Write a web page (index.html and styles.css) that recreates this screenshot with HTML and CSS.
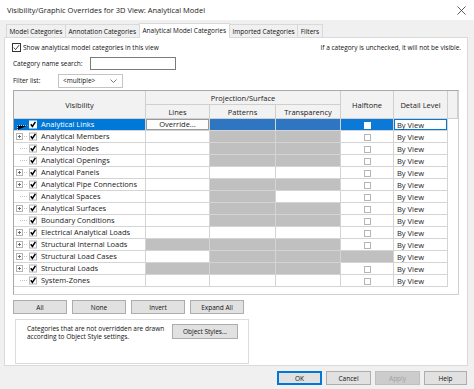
FILE: index.html
```html
<!DOCTYPE html>
<html>
<head>
<meta charset="utf-8">
<link rel="stylesheet" href="styles.css">
</head>
<body>
<svg class="defs" width="0" height="0" aria-hidden="true">
  <defs>
    <symbol id="t-exp" viewBox="0 0 26 11">
      <rect x="2.5" y="2.5" width="6" height="6" fill="#fff" stroke="#b4b4b4"/>
      <path d="M4 5.5h3M5.5 4v3" stroke="#6a6a6a" stroke-width="1"/>
      <path d="M10 5.5h4" stroke="#c8c8c8" stroke-dasharray="1 1"/>
      <rect x="15.5" y="2" width="7" height="7" fill="#fff" stroke="#b8b8b8"/>
      <path d="M16.8 5.3l1.6 2.1l3-4.6" fill="none" stroke="#000" stroke-width="1.5"/>
    </symbol>
    <symbol id="t-leaf" viewBox="0 0 26 11">
      <path d="M6 5.5h8" stroke="#c4c4c4" stroke-dasharray="1 1"/>
      <rect x="15.5" y="2" width="7" height="7" fill="#fff" stroke="#b8b8b8"/>
      <path d="M16.8 5.3l1.6 2.1l3-4.6" fill="none" stroke="#000" stroke-width="1.5"/>
    </symbol>
    <symbol id="t-root" viewBox="0 0 26 11">
      <path d="M3.5 11V6.5h10" stroke="#bcd8f3" stroke-dasharray="1 1"/>
      <rect x="15.5" y="2" width="7" height="7" fill="#fff" stroke="#fff"/>
      <path d="M16.8 5.3l1.6 2.1l3-4.6" fill="none" stroke="#000" stroke-width="1.5"/>
    </symbol>
  </defs>
</svg>

<div class="titlebar">
  <span class="title">Visibility/Graphic Overrides for 3D View: Analytical Model</span>
  <svg class="close" width="9" height="9" viewBox="0 0 9 9"><path d="M0.5 0.5l8 8M8.5 0.5l-8 8" stroke="#333" stroke-width="0.8"/></svg>
</div>

<div class="tabs">
  <div class="tab">Model Categories</div>
  <div class="tab">Annotation Categories</div>
  <div class="tab active">Analytical Model Categories</div>
  <div class="tab">Imported Categories</div>
  <div class="tab">Filters</div>
</div>

<div class="panel">
  <div class="row-show">
    <label class="show">
      <svg class="cb" width="9" height="9" viewBox="0 0 9 9"><rect x="0.5" y="0.5" width="8" height="8" fill="#fff" stroke="#333"/><path d="M1.8 4.6l1.8 2l3.6-4.6" fill="none" stroke="#333" stroke-width="0.9"/></svg>
      <span>Show analytical model categories in this view</span>
    </label>
    <span class="hint">If a category is unchecked, it will not be visible.</span>
  </div>
  <div class="field">
    <span class="lbl lbl-search">Category name search:</span>
    <span class="input"></span>
  </div>
  <div class="field field-filter">
    <span class="lbl lbl-filter">Filter list:</span>
    <span class="select"><span>&lt;multiple&gt;</span><svg width="7" height="4" viewBox="0 0 7 4"><path d="M0.5 0.5l3 3l3-3" fill="none" stroke="#555" stroke-width="0.8"/></svg></span>
  </div>

  <div class="grid">
    <table>
      <colgroup>
        <col class="c-vis"><col class="c-lines"><col class="c-pat"><col class="c-tr"><col class="c-half"><col class="c-det"><col class="c-fill">
      </colgroup>
      <thead>
        <tr class="h1">
          <th rowspan="2">Visibility</th>
          <th colspan="3">Projection/Surface</th>
          <th rowspan="2">Halftone</th>
          <th rowspan="2">Detail Level</th>
          <th rowspan="2" class="hfill"></th>
        </tr>
        <tr class="h2">
          <th>Lines</th><th>Patterns</th><th>Transparency</th>
        </tr>
      </thead>
      <tbody>
        <tr class="sel">
          <td class="vis vis-sel"><svg class="tree" width="26" height="11"><use href="#t-root"/></svg>Analytical Links</td>
          <td class="ov"><span class="override">Override...</span></td>
          <td class="sb"><span class="sbfill"></span></td><td class="sb"><span class="sbfill"></span></td>
          <td class="half half-sel"><span class="hb hb-sel"></span></td>
          <td class="det det-sel">By View</td>
          <td class="fill"></td>
        </tr>
        <tr>
          <td class="vis"><svg class="tree" width="26" height="11"><use href="#t-exp"/></svg>Analytical Members</td>
          <td></td><td class="g"></td><td class="g"></td>
          <td class="half"><span class="hb"></span></td><td class="det">By View</td><td class="fill"></td>
        </tr>
        <tr>
          <td class="vis"><svg class="tree" width="26" height="11"><use href="#t-leaf"/></svg>Analytical Nodes</td>
          <td></td><td class="g"></td><td class="g"></td>
          <td class="half"><span class="hb"></span></td><td class="det">By View</td><td class="fill"></td>
        </tr>
        <tr>
          <td class="vis"><svg class="tree" width="26" height="11"><use href="#t-leaf"/></svg>Analytical Openings</td>
          <td></td><td class="g"></td><td class="g"></td>
          <td class="half"><span class="hb"></span></td><td class="det">By View</td><td class="fill"></td>
        </tr>
        <tr>
          <td class="vis"><svg class="tree" width="26" height="11"><use href="#t-exp"/></svg>Analytical Panels</td>
          <td></td><td></td><td></td>
          <td class="half"><span class="hb"></span></td><td class="det">By View</td><td class="fill"></td>
        </tr>
        <tr>
          <td class="vis"><svg class="tree" width="26" height="11"><use href="#t-exp"/></svg>Analytical Pipe Connections</td>
          <td></td><td class="g"></td><td class="g"></td>
          <td class="half"><span class="hb"></span></td><td class="det">By View</td><td class="fill"></td>
        </tr>
        <tr>
          <td class="vis"><svg class="tree" width="26" height="11"><use href="#t-leaf"/></svg>Analytical Spaces</td>
          <td></td><td class="g"></td><td></td>
          <td class="half"><span class="hb"></span></td><td class="det">By View</td><td class="fill"></td>
        </tr>
        <tr>
          <td class="vis"><svg class="tree" width="26" height="11"><use href="#t-exp"/></svg>Analytical Surfaces</td>
          <td></td><td class="g"></td><td class="g"></td>
          <td class="half"><span class="hb"></span></td><td class="det">By View</td><td class="fill"></td>
        </tr>
        <tr>
          <td class="vis"><svg class="tree" width="26" height="11"><use href="#t-leaf"/></svg>Boundary Conditions</td>
          <td></td><td class="g"></td><td class="g"></td>
          <td class="half"><span class="hb"></span></td><td class="det">By View</td><td class="fill"></td>
        </tr>
        <tr>
          <td class="vis"><svg class="tree" width="26" height="11"><use href="#t-exp"/></svg>Electrical Analytical Loads</td>
          <td></td><td></td><td></td>
          <td class="half"><span class="hb"></span></td><td class="det">By View</td><td class="fill"></td>
        </tr>
        <tr>
          <td class="vis"><svg class="tree" width="26" height="11"><use href="#t-exp"/></svg>Structural Internal Loads</td>
          <td class="g"></td><td class="g"></td><td class="g"></td>
          <td class="half"><span class="hb"></span></td><td class="det">By View</td><td class="fill"></td>
        </tr>
        <tr>
          <td class="vis"><svg class="tree" width="26" height="11"><use href="#t-exp"/></svg>Structural Load Cases</td>
          <td></td><td class="g"></td><td class="g"></td>
          <td class="half g"></td><td class="det">By View</td><td class="fill"></td>
        </tr>
        <tr>
          <td class="vis"><svg class="tree" width="26" height="11"><use href="#t-exp"/></svg>Structural Loads</td>
          <td class="g"></td><td class="g"></td><td class="g"></td>
          <td class="half"><span class="hb"></span></td><td class="det">By View</td><td class="fill"></td>
        </tr>
        <tr>
          <td class="vis"><svg class="tree" width="26" height="11"><use href="#t-leaf"/></svg>System-Zones</td>
          <td></td><td></td><td></td>
          <td class="half"><span class="hb"></span></td><td class="det">By View</td><td class="fill"></td>
        </tr>
      </tbody>
    </table>
  </div>

  <div class="btnrow">
    <button class="btn">All</button>
    <button class="btn">None</button>
    <button class="btn">Invert</button>
    <button class="btn">Expand All</button>
  </div>

  <div class="notebox">
    <p class="note">Categories that are not overridden are drawn according to Object Style settings.</p>
    <button class="btn btn-os">Object Styles...</button>
  </div>
</div>

<div class="footer">
  <button class="btn fbtn ok">OK</button>
  <button class="btn fbtn">Cancel</button>
  <button class="btn fbtn disabled">Apply</button>
  <button class="btn fbtn help">Help</button>
</div>
</body>
</html>
```
FILE: styles.css
```css
* { box-sizing: border-box; }

html, body {
  margin: 0;
  padding: 0;
}

body {
  width: 474px;
  height: 389px;
  overflow: hidden;
  background: #f0f0f0;
  font-family: "Open Sans", "Noto Sans", "DejaVu Sans", sans-serif;
  font-size: 6.5px;
  color: #111;
}

.defs { position: absolute; width: 0; height: 0; }

.titlebar {
  height: 20px;
  background: #fff;
  display: flex;
  align-items: center;
  justify-content: space-between;
  padding: 0 8px 0 7px;
}
.title { font-size: 7.5px; color: #222; }
.close { display: block; }

.tabs {
  height: 17px;
  display: flex;
  align-items: flex-end;
  padding-left: 6px;
}
.tab {
  height: 13px;
  padding: 0 2.5px;
  border: 1px solid #d9d9d9;
  border-bottom: 0;
  margin-right: -1px;
  display: flex;
  align-items: center;
  background: #f0f0f0;
  white-space: nowrap;
}
.tab.active {
  height: 15px;
  background: #fff;
  position: relative;
  z-index: 1;
  margin-bottom: -1px;
  padding: 0 3px 2px;
}

.panel {
  margin-left: 4px;
  width: 464px;
  height: 329px;
  background: #fff;
  border: 1px solid #dadada;
  padding-left: 8px;
}

.row-show {
  margin-top: 4px;
  height: 10px;
  display: flex;
  align-items: center;
  justify-content: space-between;
  padding-right: 6px;
}
.show {
  display: flex;
  align-items: center;
  margin-left: -1px;
}
.cb { display: block; margin-right: 2px; }

.field {
  margin-top: 5px;
  height: 13px;
  display: flex;
  align-items: center;
}
.field-filter { margin-top: 4px; }
.lbl-search { width: 77px; }
.lbl-filter { width: 45px; }
.input {
  width: 86px;
  height: 13px;
  border: 1px solid #7a7a7a;
  background: #fff;
}
.select {
  width: 65px;
  height: 14px;
  border: 1px solid #c4c4c4;
  background: #fff;
  display: flex;
  align-items: center;
  justify-content: space-between;
  padding: 0 5px 0 4px;
}
.select svg { display: block; }

.grid {
  margin-top: 3px;
  width: 446px;
  height: 205px;
  border: 1px solid #a9a9a9;
  border-right-color: #d0d0d0;
  border-bottom-color: #d0d0d0;
  background: #fff;
  overflow: hidden;
}
table {
  width: 444px;
  table-layout: fixed;
  border-collapse: separate;
  border-spacing: 0;
  font-size: 7.5px;
}
.c-vis { width: 132px; }
.c-lines { width: 64px; }
.c-pat { width: 66px; }
.c-tr { width: 65px; }
.c-half { width: 53px; }
.c-det { width: 54px; }
.c-fill { width: 10px; }

th, td {
  padding: 0;
  border-right: 1px solid #d4d4d4;
  border-bottom: 1px solid #d4d4d4;
  white-space: nowrap;
  overflow: hidden;
}
th {
  background: #f2f2f2;
  font-weight: normal;
  text-align: center;
  color: #222;
  border-color: #cfcfcf;
}
.h1 th { height: 14px; }
.h2 th { height: 14px; }

tbody tr { height: 11.5px; }
td { height: 11.5px; line-height: 10px; color: #1a1a1a; }
.tree {
  display: inline-block;
  vertical-align: top;
  margin-right: 1px;
}
td.g { background: #c0c0c0; }
td.half { text-align: center; }
.hb {
  display: inline-block;
  width: 7px;
  height: 7px;
  border: 1px solid #b5b5b5;
  background: #fff;
  vertical-align: middle;
  margin-top: -1px;
}
td.det { padding-left: 3px; }
td.fill { border: 0; background: #fff; }

td.vis-sel { background-color: #0078d7; color: #fff; }
td.sb { background-color: #2f76c2; }
.sbfill { display: block; height: 10.5px; background: #2f76c2; }
td.half-sel { background-color: #0a79d7; }
.hb-sel { border-color: #fff; }
td.det-sel { box-shadow: inset 0 0 0 1px #0078d7; }
td.ov { padding: 0; }
.override {
  display: block;
  height: 10.5px;
  line-height: 10px;
  text-align: center;
  background: #fdfdfd;
  box-shadow: inset 0 0 0 1px #9a9a9a;
}

.btn {
  font-family: inherit;
  font-size: 6.5px;
  color: #111;
  background: #e1e1e1;
  border: 1px solid #adadad;
  padding: 0;
  margin: 0;
}

.btnrow {
  margin-top: 5px;
  height: 14px;
  display: flex;
  gap: 5px;
}
.btnrow .btn { width: 54px; height: 14px; }

.notebox {
  margin: 5px 0 0 2px;
  width: 234px;
  height: 45px;
  border: 1px solid #dcdcdc;
  display: flex;
  align-items: flex-start;
  padding: 4px 0 0 11px;
}
.note {
  margin: 1px 0 0;
  width: 144px;
  line-height: 8px;
}
.btn-os {
  margin-left: 1px;
  width: 66px;
  height: 15px;
}

.footer {
  height: 24px;
  display: flex;
  justify-content: flex-end;
  align-items: flex-start;
  padding: 5px 7px 0 0;
  gap: 4px;
}
.fbtn { width: 45px; height: 14px; }
.fbtn.help { width: 43px; }
.fbtn.ok { border-color: #0078d7; box-shadow: inset 0 0 0 1px #0078d7; }
.fbtn.disabled { background: #cccccc; border-color: #bfbfbf; color: #a0a0a0; }
```
